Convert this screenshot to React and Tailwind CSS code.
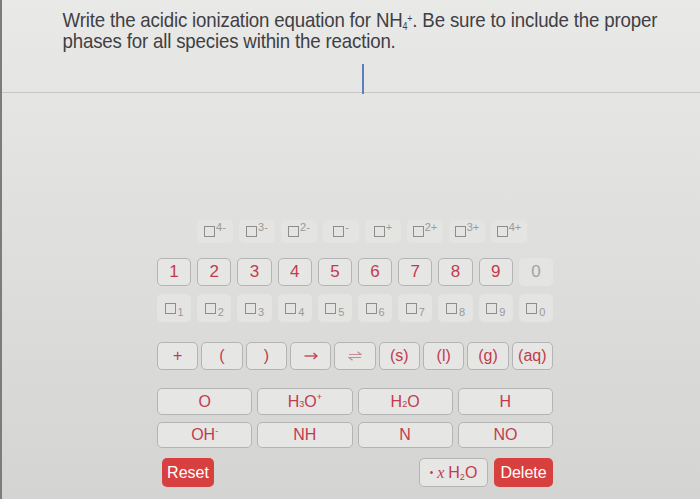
import React from "react";

const RED = "text-[#c23b4d]";

/* small outlined box used in the charge / subscript keys */
function Box() {
    return <span className="inline-block w-[11px] h-[11px] border border-[#8d8d8d]" />;
}

function SupKey({ label }) {
    return (
        <button className="h-[23px] rounded-[5px] bg-[#e4e4e3] flex items-center justify-center">
            <Box />
            <span className="text-[11px] leading-none text-[#9a9a9a] -mt-[9px] ml-[1px]">{label}</span>
        </button>
    );
}

function SubKey({ label }) {
    return (
        <button className="h-[28px] rounded-[5px] bg-[#e4e4e3] flex items-center justify-center">
            <Box />
            <span className="text-[11px] leading-none text-[#9a9a9a] mt-[9px] ml-[2px]">{label}</span>
        </button>
    );
}

function Key({ children, className = "" }) {
    return (
        <button
            className={`rounded-[5px] border border-[#b4b4b4] bg-[#e6e6e5] flex items-center justify-center text-[16px] ${RED} ${className}`}
        >
            {children}
        </button>
    );
}

export default function App() {
    const sups = ["4-", "3-", "2-", "-", "+", "2+", "3+", "4+"];
    const digits = ["1", "2", "3", "4", "5", "6", "7", "8", "9"];
    const subs = ["1", "2", "3", "4", "5", "6", "7", "8", "9", "0"];

    return (
        <div
            className="w-[700px] h-[499px] overflow-hidden border-l-2 border-[#7c7c7c] bg-gradient-to-b from-[#e9e9e8] to-[#d4d4d2]"
            style={{ fontFamily: '"Liberation Sans", Arial, sans-serif' }}
        >
            {/* ── 문제 ── */}
            <div className="pl-[68px] pt-[9px] text-[21px] leading-[21px] text-[#3f3f44] tracking-[-0.2px] whitespace-nowrap origin-left scale-x-[0.89]">
                <p>
                    Write the acidic ionization equation for NH
                    <sub className="text-[10px]">4</sub>
                    <sup className="text-[10px]">+</sup>. Be sure to include the proper
                </p>
                <p>phases for all species within the reaction.</p>
            </div>

            {/* ── 답안 입력줄 ── */}
            <div className="h-[38px] mt-[4px] border-b border-[#c6c6c6] flex">
                <div className="ml-[360px] mt-[9px] w-[1.5px] h-[30px] bg-[#5b7fbf]" />
            </div>

            {/* ── 키패드 ── */}
            <div className="ml-[155px] w-[396px] mt-[127px] flex flex-col">
                <div className="ml-[40px] grid grid-cols-8 gap-[6px] w-[330px]">
                    {sups.map((s) => (
                        <SupKey key={s} label={s} />
                    ))}
                </div>

                <div className="mt-[15px] grid grid-cols-10 gap-[6px]">
                    {digits.map((d) => (
                        <Key key={d} className="h-[28px] text-[17px] border-[#a9a9a9]">{d}</Key>
                    ))}
                    <button className="h-[28px] rounded-[5px] bg-[#e4e4e3] text-[17px] text-[#a3a3a3]">0</button>
                </div>

                <div className="mt-[8px] grid grid-cols-10 gap-[6px]">
                    {subs.map((s) => (
                        <SubKey key={s} label={s} />
                    ))}
                </div>

                <div className="mt-[20px] grid grid-cols-9 gap-[3px]">
                    <Key className="h-[28px] text-[15px]">+</Key>
                    <Key className="h-[28px]">(</Key>
                    <Key className="h-[28px]">)</Key>
                    <Key className="h-[28px]">
                        <svg width="14" height="8" viewBox="0 0 14 8" fill="none" stroke="#c23b4d" strokeWidth="1.3">
                            <path d="M0.5 4H13" />
                            <path d="M9.5 1L13 4L9.5 7" />
                        </svg>
                    </Key>
                    <Key className="h-[28px]">
                        <svg width="14" height="10" viewBox="0 0 14 10" fill="none" stroke="#c98a95" strokeWidth="1.2">
                            <path d="M1 3.5H13L9.5 0.8" />
                            <path d="M13 6.5H1L4.5 9.2" />
                        </svg>
                    </Key>
                    <Key className="h-[28px]">(s)</Key>
                    <Key className="h-[28px]">(l)</Key>
                    <Key className="h-[28px]">(g)</Key>
                    <Key className="h-[28px]">(aq)</Key>
                </div>

                <div className="mt-[18px] grid grid-cols-4 gap-[5px]">
                    <Key className="h-[27px]">O</Key>
                    <Key className="h-[27px]">
                        H<sub className="text-[9px]">3</sub>O<sup className="text-[9px]">+</sup>
                    </Key>
                    <Key className="h-[27px]">
                        H<sub className="text-[9px]">2</sub>O
                    </Key>
                    <Key className="h-[27px]">H</Key>
                </div>

                <div className="mt-[7px] grid grid-cols-4 gap-[5px]">
                    <Key className="h-[26px]">
                        OH<sup className="text-[9px]">-</sup>
                    </Key>
                    <Key className="h-[26px]">NH</Key>
                    <Key className="h-[26px]">N</Key>
                    <Key className="h-[26px]">NO</Key>
                </div>

                <div className="mt-[10px] flex items-center">
                    <button className="h-[29px] w-[52px] ml-[5px] rounded-[5px] bg-[#d8403f] text-white text-[16px]">
                        Reset
                    </button>
                    <Key className="h-[29px] w-[69px] ml-auto">
                        <span className="text-[10px] mr-[4px]">•</span>
                        <span className="italic" style={{ fontFamily: '"Liberation Serif", serif' }}>x</span>
                        <span className="ml-[4px]">
                            H<sub className="text-[9px]">2</sub>O
                        </span>
                    </Key>
                    <button className="h-[29px] w-[59px] ml-[6px] rounded-[5px] bg-[#d8403f] text-white text-[16px]">
                        Delete
                    </button>
                </div>
            </div>
        </div>
    );
}
